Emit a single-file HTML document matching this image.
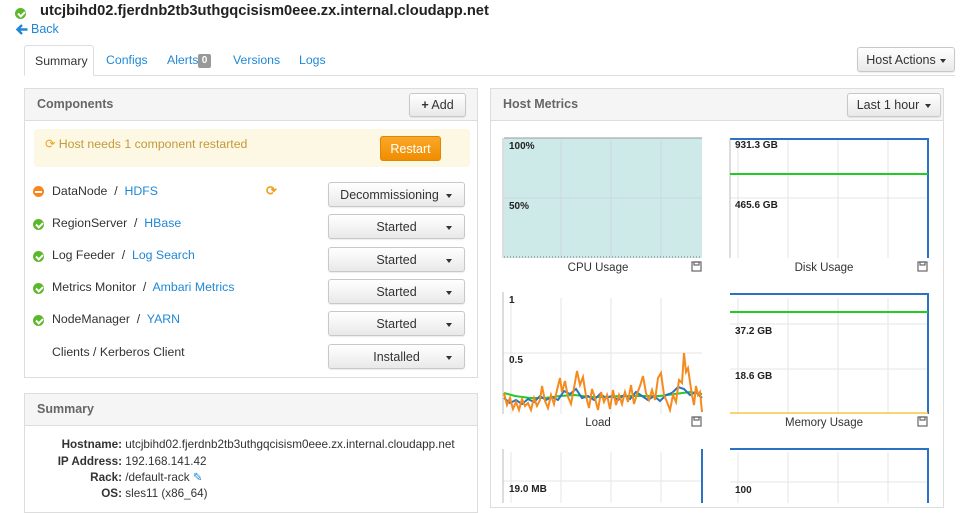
<!DOCTYPE html>
<html><head><meta charset="utf-8"><style>
*{box-sizing:border-box}
body{margin:0;width:975px;height:503px;overflow:hidden;background:#fff;font-family:"Liberation Sans",Arial,sans-serif;color:#333;position:relative}
.a{position:absolute}
.link{color:#1f88d6}
.btn{position:absolute;border:1px solid #c8c8c8;border-radius:3px;background:linear-gradient(#fff,#e9e9e9);font-size:12.5px;color:#333;text-align:center;box-shadow:0 1px 1px rgba(0,0,0,.08)}
.caret{display:inline-block;width:0;height:0;border-left:3.5px solid transparent;border-right:3.5px solid transparent;border-top:4px solid #333;vertical-align:middle;margin-left:6px}
.panel{position:absolute;border:1px solid #ddd;background:#fff}
.ph{position:absolute;left:0;right:0;top:0;height:32px;background:#f5f5f5;border-bottom:1px solid #ddd;font-weight:bold;color:#666;font-size:12.5px;padding:8px 0 0 12px}
.ok{position:absolute;width:11px;height:11px;border-radius:50%;background:#5cb82a}
.ok:after{content:"";position:absolute;left:3.5px;top:1.5px;width:3px;height:5px;border:solid #fff;border-width:0 2px 2px 0;transform:rotate(45deg)}
.row{position:absolute;left:52px;font-size:12.3px;color:#333}
.sb{position:absolute;left:328px;width:137px;height:25px;padding-top:5px}
.sb .caret{position:absolute;right:12px;top:11px}
.lbl{position:absolute;font-size:11.7px;color:#333;line-height:14px;height:14px;white-space:nowrap}
.k{display:inline-block;width:100px;text-align:right;font-weight:bold}
</style></head><body>
<div class="ok" style="left:15px;top:8px"></div>
<div class="a" style="left:40px;top:3px;font-size:14.7px;font-weight:bold;color:#222">utcjbihd02.fjerdnb2tb3uthgqcisism0eee.zx.internal.cloudapp.net</div>
<svg class="a" style="left:16px;top:24px" width="12" height="11" viewBox="0 0 12 11"><path d="M6 1L1.5 5.5L6 10M2 5.5H11.5" fill="none" stroke="#1f88d6" stroke-width="2.4"/></svg>
<div class="a link" style="left:31px;top:22px;font-size:12.5px">Back</div>
<div class="a" style="left:24px;top:75px;width:931px;border-top:1px solid #ddd"></div>
<div class="a" style="left:24px;top:45px;width:70px;height:31px;border:1px solid #ddd;border-bottom:1px solid #fff;background:#fff;border-radius:3px 3px 0 0;font-size:12.3px;padding:8px 0 0 10px">Summary</div>
<div class="a link" style="left:106px;top:53px;font-size:12.3px">Configs</div>
<div class="a link" style="left:167px;top:53px;font-size:12.3px">Alerts</div>
<div class="a" style="left:198px;top:54px;width:13px;height:14px;background:#999;border-radius:2px;color:#fff;font-size:10px;font-weight:bold;text-align:center;padding-top:1px">0</div>
<div class="a link" style="left:233px;top:53px;font-size:12.3px">Versions</div>
<div class="a link" style="left:299px;top:53px;font-size:12.3px">Logs</div>
<div class="btn" style="left:857px;top:47px;width:98px;height:25px;padding-top:5px">Host Actions<span class="caret" style="margin-left:4px"></span></div>

<div class="panel" style="left:24px;top:88px;width:454px;height:290px">
<div class="ph">Components</div>
<div class="btn" style="left:384px;top:4px;width:57px;height:24px;padding-top:4px"><b>+</b> Add</div>
<div class="a" style="left:9px;top:40px;width:436px;height:38px;background:#fcf8e3;border-radius:3px"></div>
<div class="a" style="left:20px;top:48px;font-size:12.3px;color:#c49a3a"><span style="color:#f0a020">⟳</span> Host needs 1 component restarted</div>
<div class="a" style="left:355px;top:47px;width:61px;height:25px;background:linear-gradient(#fba72a,#f08d00);border:1px solid #e08600;border-radius:3px;color:#fff;font-size:12.5px;text-align:center;padding-top:5px">Restart</div>
</div>
<div class="a" style="left:33px;top:186px;width:11px;height:11px;border-radius:50%;background:#f7861c"><div class="a" style="left:2px;top:4.5px;width:7px;height:2px;background:#fff"></div></div>
<div class="row" style="top:184px">DataNode &nbsp;/&nbsp; <span class="link">HDFS</span></div>
<div class="a" style="left:266px;top:183px;color:#f0a020;font-size:13px;font-weight:bold">⟳</div>
<div class="btn sb" style="top:182px;padding-right:14px">Decommissioning<span class="caret"></span></div>
<div class="ok" style="left:33px;top:219px"></div>
<div class="row" style="top:216px">RegionServer &nbsp;/&nbsp; <span class="link">HBase</span></div>
<div class="btn sb" style="top:214px">Started<span class="caret"></span></div>
<div class="ok" style="left:33px;top:251px"></div>
<div class="row" style="top:248px">Log Feeder &nbsp;/&nbsp; <span class="link">Log Search</span></div>
<div class="btn sb" style="top:247px">Started<span class="caret"></span></div>
<div class="ok" style="left:33px;top:283px"></div>
<div class="row" style="top:280px">Metrics Monitor &nbsp;/&nbsp; <span class="link">Ambari Metrics</span></div>
<div class="btn sb" style="top:279px">Started<span class="caret"></span></div>
<div class="ok" style="left:33px;top:315px"></div>
<div class="row" style="top:312px">NodeManager &nbsp;/&nbsp; <span class="link">YARN</span></div>
<div class="btn sb" style="top:311px">Started<span class="caret"></span></div>
<div class="row" style="top:345px">Clients / Kerberos Client</div>
<div class="btn sb" style="top:344px">Installed<span class="caret"></span></div>

<div class="panel" style="left:24px;top:393px;width:454px;height:120px">
<div class="ph">Summary</div>
</div>
<div class="lbl" style="left:22px;top:438px"><span class="k">Hostname:</span> utcjbihd02.fjerdnb2tb3uthgqcisism0eee.zx.internal.cloudapp.net</div>
<div class="lbl" style="left:22px;top:455px"><span class="k">IP Address:</span> 192.168.141.42</div>
<div class="lbl" style="left:22px;top:471px"><span class="k">Rack:</span> /default-rack <span style="color:#1f88d6">✎</span></div>
<div class="lbl" style="left:22px;top:487px"><span class="k">OS:</span> sles11 (x86_64)</div>

<div class="panel" style="left:490px;top:88px;width:454px;height:420px">
<div class="ph">Host Metrics</div>
<div class="btn" style="left:356px;top:4px;width:94px;height:24px;padding-top:4px">Last 1 hour<span class="caret"></span></div>
</div>
<svg class="a" style="left:0;top:0" width="975" height="503" font-family="Liberation Sans,Arial,sans-serif">
<g stroke="#e6e6e6" stroke-width="1">
<line x1="511" y1="140" x2="511" y2="258"/><line x1="561" y1="140" x2="561" y2="258"/><line x1="611" y1="140" x2="611" y2="258"/><line x1="661" y1="140" x2="661" y2="258"/>
<line x1="738" y1="140" x2="738" y2="258"/><line x1="788" y1="140" x2="788" y2="258"/><line x1="838" y1="140" x2="838" y2="258"/><line x1="888" y1="140" x2="888" y2="258"/>
<line x1="511" y1="298" x2="511" y2="414"/><line x1="561" y1="298" x2="561" y2="414"/><line x1="611" y1="298" x2="611" y2="414"/><line x1="661" y1="298" x2="661" y2="414"/>
<line x1="738" y1="298" x2="738" y2="414"/><line x1="788" y1="298" x2="788" y2="414"/><line x1="838" y1="298" x2="838" y2="414"/><line x1="888" y1="298" x2="888" y2="414"/>
<line x1="511" y1="452" x2="511" y2="503"/><line x1="561" y1="452" x2="561" y2="503"/><line x1="611" y1="452" x2="611" y2="503"/><line x1="661" y1="452" x2="661" y2="503"/>
<line x1="738" y1="452" x2="738" y2="503"/><line x1="788" y1="452" x2="788" y2="503"/><line x1="838" y1="452" x2="838" y2="503"/><line x1="888" y1="452" x2="888" y2="503"/>
<line x1="503" y1="198" x2="702" y2="198"/><line x1="730" y1="198" x2="928" y2="198"/>
<line x1="503" y1="353" x2="702" y2="353"/><line x1="730" y1="324" x2="928" y2="324"/><line x1="730" y1="369" x2="928" y2="369"/>
<line x1="503" y1="481" x2="702" y2="481"/><line x1="730" y1="482" x2="928" y2="482"/>
</g>
<rect x="504" y="138" width="198" height="120" fill="#cdeae9"/>
<g stroke="#ccd" stroke-width="1" opacity=".6"><line x1="561" y1="140" x2="561" y2="258"/><line x1="611" y1="140" x2="611" y2="258"/><line x1="661" y1="140" x2="661" y2="258"/><line x1="504" y1="198" x2="702" y2="198"/></g>
<line x1="504" y1="257" x2="702" y2="257" stroke="#777" stroke-dasharray="1 2"/>
<line x1="504" y1="138" x2="702" y2="138" stroke="#999"/>
<line x1="503" y1="138" x2="503" y2="258" stroke="#bbb"/>
<path d="M730 139H928V258" fill="none" stroke="#2a73c4" stroke-width="2"/>
<line x1="730" y1="139" x2="730" y2="258" stroke="#bbb"/>
<line x1="730" y1="174" x2="928" y2="174" stroke="#22cc22" stroke-width="2"/>
<path d="M730 294H928V414" fill="none" stroke="#2a73c4" stroke-width="2"/>
<line x1="730" y1="312" x2="928" y2="312" stroke="#22cc22" stroke-width="2"/>
<line x1="730" y1="413" x2="928" y2="413" stroke="#f5c842" stroke-width="1.5"/>
<path d="M730 449H928V503" fill="none" stroke="#2a73c4" stroke-width="2"/>
<line x1="702" y1="449" x2="702" y2="503" stroke="#2a73c4" stroke-width="2"/>
<line x1="503" y1="292" x2="503" y2="414" stroke="#bbb"/><line x1="503" y1="449" x2="503" y2="503" stroke="#bbb"/>
<polyline fill="none" stroke="#22cc22" stroke-width="2" points="504,393 515,396 530,398 545,398 560,396 575,395 590,397 605,397 620,396 640,396 660,396 675,394 690,392 702,394"/>
<polyline fill="none" stroke="#2a73c4" stroke-width="2" points="504,398 510,403 516,400 522,404 528,399 534,402 540,396 546,400 552,397 558,400 564,391 570,394 576,389 582,398 588,396 594,400 600,394 606,398 612,396 618,400 624,395 630,399 636,392 642,396 648,400 654,396 660,401 666,395 672,393 678,387 684,389 690,395 696,392 702,398"/>
<polyline fill="none" stroke="#f58a1f" stroke-width="2" points="504,393 507,405 510,398 513,409 516,402 519,410 522,399 525,406 528,403 531,410 534,398 537,406 540,400 542,386 545,401 548,408 551,395 554,404 557,390 560,378 562,392 565,381 568,397 571,404 574,388 577,371 580,385 583,377 586,396 589,408 592,389 595,398 598,410 601,392 604,402 607,395 610,409 613,390 616,405 619,395 622,404 625,392 628,402 631,385 634,404 637,394 640,386 643,376 646,393 649,400 652,390 655,400 658,378 661,373 664,395 667,402 670,410 673,395 676,402 679,380 682,383 684,353 686,372 688,368 690,382 692,395 694,405 696,386 698,395 700,392 702,412"/>
<g font-size="10" font-weight="bold" fill="#222">
<text x="509" y="149">100%</text><text x="509" y="209">50%</text>
<text x="735" y="148">931.3 GB</text><text x="735" y="208">465.6 GB</text>
<text x="509" y="303">1</text><text x="509" y="363">0.5</text>
<text x="735" y="334">37.2 GB</text><text x="735" y="379">18.6 GB</text>
<text x="509" y="492">19.0 MB</text><text x="735" y="493">100</text>
</g>
<g font-size="11.5" fill="#333" text-anchor="middle">
<text x="598" y="271">CPU Usage</text><text x="824" y="271">Disk Usage</text>
<text x="598" y="426">Load</text><text x="824" y="426">Memory Usage</text>
</g>
<g fill="none" stroke="#666" stroke-width="1.2">
<rect x="692" y="262" width="9" height="9"/><rect x="694" y="262" width="5" height="3"/>
<rect x="918" y="262" width="9" height="9"/><rect x="920" y="262" width="5" height="3"/>
<rect x="692" y="417" width="9" height="9"/><rect x="694" y="417" width="5" height="3"/>
<rect x="918" y="417" width="9" height="9"/><rect x="920" y="417" width="5" height="3"/>
</g>
</svg>
</body></html>
